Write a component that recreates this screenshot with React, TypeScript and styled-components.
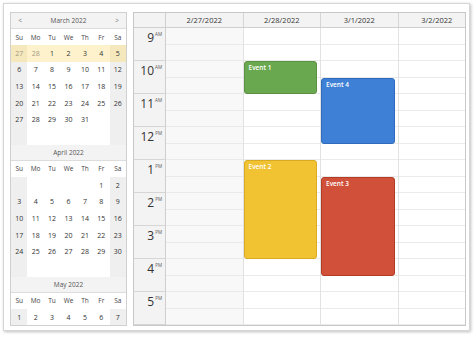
import styled, { createGlobalStyle } from "styled-components";

const GlobalStyle = createGlobalStyle`
  body {
    margin: 0;
    background: #fff;
    font-family: "Open Sans", "Noto Sans", sans-serif;
    color: #333;
  }
`;

type NavDay = { day: number | null; other?: boolean };
type NavMonth = { title: string; weeks: NavDay[][]; selectedWeek?: number; arrows?: boolean };

// rows: how many week rows fit in the navigator for this month
function buildMonth(firstDow: number, length: number, prevLength: number, showPrev: boolean, rows = 6): NavDay[][] {
  const cells: NavDay[] = [];
  for (let i = 0; i < firstDow; i++) {
    cells.push(showPrev ? { day: prevLength - firstDow + 1 + i, other: true } : { day: null });
  }
  for (let d = 1; d <= length; d++) cells.push({ day: d });
  while (cells.length < 42) cells.push({ day: null });
  const weeks: NavDay[][] = [];
  for (let w = 0; w < rows; w++) weeks.push(cells.slice(w * 7, w * 7 + 7));
  return weeks;
}

const months: NavMonth[] = [
  { title: "March 2022", weeks: buildMonth(2, 31, 28, true), selectedWeek: 0, arrows: true },
  { title: "April 2022", weeks: buildMonth(5, 30, 31, false) },
  { title: "May 2022", weeks: buildMonth(0, 31, 30, false, 1) },
];

const dayNames = ["Su", "Mo", "Tu", "We", "Th", "Fr", "Sa"];

const hours = [
  { h: "9", s: "AM" },
  { h: "10", s: "AM" },
  { h: "11", s: "AM" },
  { h: "12", s: "PM" },
  { h: "1", s: "PM" },
  { h: "2", s: "PM" },
  { h: "3", s: "PM" },
  { h: "4", s: "PM" },
  { h: "5", s: "PM" },
];

const days = ["2/27/2022", "2/28/2022", "3/1/2022", "3/2/2022"];

// start / end in hours from 9 AM
const events = [
  { text: "Event 1", day: 1, start: 1, end: 2, color: "#6aa84f", border: "#5a9142" },
  { text: "Event 4", day: 2, start: 1.5, end: 3.5, color: "#3d80d6", border: "#2f6cbd" },
  { text: "Event 2", day: 1, start: 4, end: 7, color: "#f1c232", border: "#d9aa22" },
  { text: "Event 3", day: 2, start: 4.5, end: 7.5, color: "#d0503a", border: "#b33c27" },
];

const HOUR = 33;

function App() {
  return (
    <>
      <GlobalStyle />
      <Card>
        <Navigator>
          {months.map((m) => (
            <Month key={m.title}>
              <MonthTitle>
                <Arrow>{m.arrows ? "<" : ""}</Arrow>
                <span>{m.title}</span>
                <Arrow>{m.arrows ? ">" : ""}</Arrow>
              </MonthTitle>
              <DayNames>
                {dayNames.map((d) => (
                  <DayName key={d}>{d}</DayName>
                ))}
              </DayNames>
              <Weeks>
                {m.weeks.map((week, wi) =>
                  week.map((c, di) => (
                    <DayCell
                      key={`${wi}-${di}`}
                      $weekend={di === 0 || di === 6}
                      $selected={m.selectedWeek === wi}
                      $other={!!c.other}
                    >
                      {c.day ?? ""}
                    </DayCell>
                  ))
                )}
              </Weeks>
            </Month>
          ))}
        </Navigator>

        <Calendar>
          <HeaderRow>
            <Corner />
            {days.map((d) => (
              <DayHeader key={d}>{d}</DayHeader>
            ))}
          </HeaderRow>
          <Body>
            <RowHeader>
              {hours.map((h) => (
                <HourLabel key={h.h}>
                  {h.h}
                  <Suffix>{h.s}</Suffix>
                </HourLabel>
              ))}
            </RowHeader>
            {days.map((d, di) => (
              <DayColumn key={d}>
                {hours.map((h) => (
                  <HourCell key={h.h}>
                    <HalfCell $off={di === 0} />
                    <HalfCell $off={di === 0} />
                  </HourCell>
                ))}
                {events
                  .filter((e) => e.day === di)
                  .map((e) => (
                    <Event
                      key={e.text}
                      $color={e.color}
                      $border={e.border}
                      style={{ top: e.start * HOUR, height: (e.end - e.start) * HOUR }}
                    >
                      {e.text}
                    </Event>
                  ))}
              </DayColumn>
            ))}
          </Body>
        </Calendar>
      </Card>
    </>
  );
}

const Card = styled.div`
  margin: 3px;
  width: 467px;
  height: 328px;
  box-sizing: border-box;
  border: 1px solid #d6d6d6;
  box-shadow: 1px 1px 3px rgba(0, 0, 0, 0.25);
  padding: 8px 3px 4px 6px;
  display: flex;
  gap: 6px;
`;

const Navigator = styled.div`
  width: 117px;
  height: 314px;
  flex-shrink: 0;
  box-sizing: border-box;
  border: 1px solid #d0d0d0;
  overflow: hidden;
  font-size: 7px;
`;

const Month = styled.div`
  display: flex;
  flex-direction: column;
`;

const MonthTitle = styled.div`
  height: 16px;
  box-sizing: border-box;
  background: #f3f3f3;
  border-bottom: 1px solid #dcdcdc;
  display: flex;
  align-items: center;
  justify-content: space-between;
  padding: 0 6px;
  color: #555;
  font-size: 6.5px;
`;

const Arrow = styled.span`
  width: 6px;
  text-align: center;
  color: #777;
`;

const DayNames = styled.div`
  height: 16px;
  display: grid;
  grid-template-columns: repeat(7, 1fr);
  background: #fff;
`;

const DayName = styled.div`
  display: flex;
  align-items: center;
  justify-content: center;
  color: #444;
  font-size: 6.5px;
`;

const Weeks = styled.div`
  display: grid;
  grid-template-columns: repeat(7, 1fr);
  grid-auto-rows: 16.67px;
`;

const DayCell = styled.div<{ $weekend: boolean; $selected: boolean; $other: boolean }>`
  display: flex;
  align-items: center;
  justify-content: center;
  color: ${({ $other }) => ($other ? "#a39a84" : "#333")};
  background: ${({ $weekend, $selected }) =>
    $selected ? ($weekend ? "#f6e8bd" : "#fdf2cc") : $weekend ? "#efefef" : "#fff"};
`;

const Calendar = styled.div`
  width: 333px;
  height: 314px;
  box-sizing: border-box;
  border: 1px solid #c8c8c8;
  overflow: hidden;
  display: flex;
  flex-direction: column;
`;

const HeaderRow = styled.div`
  display: grid;
  grid-template-columns: 32px repeat(4, 77.5px);
  height: 15px;
  box-sizing: border-box;
  flex-shrink: 0;
  border-bottom: 1px solid #cfcfcf;
  background: #f3f3f3;
`;

const Corner = styled.div`
  border-right: 1px solid #cfcfcf;
`;

const DayHeader = styled.div`
  display: flex;
  align-items: center;
  justify-content: center;
  border-right: 1px solid #d6d6d6;
  font-size: 7.5px;
  color: #333;
`;

const Body = styled.div`
  display: grid;
  grid-template-columns: 32px repeat(4, 77.5px);
`;

const RowHeader = styled.div`
  background: #f3f3f3;
  border-right: 1px solid #cfcfcf;
`;

const HourLabel = styled.div`
  height: ${HOUR}px;
  box-sizing: border-box;
  border-bottom: 1px solid #d6d6d6;
  padding: 4px 3px 0 0;
  text-align: right;
  font-size: 12px;
  line-height: 12px;
  color: #333;
`;

const Suffix = styled.span`
  font-size: 4.5px;
  line-height: 5px;
  vertical-align: top;
  margin-left: 1px;
  color: #555;
`;

const DayColumn = styled.div`
  position: relative;
  border-right: 1px solid #e2e2e2;
`;

const HourCell = styled.div`
  height: ${HOUR}px;
  display: flex;
  flex-direction: column;
`;

const HalfCell = styled.div<{ $off: boolean }>`
  flex: 1;
  box-sizing: border-box;
  border-bottom: 1px solid #eaeaea;
  background: ${({ $off }) => ($off ? "#f8f8f8" : "#fff")};
`;

const Event = styled.div<{ $color: string; $border: string }>`
  position: absolute;
  left: 0;
  right: 3px;
  box-sizing: border-box;
  background: ${({ $color }) => $color};
  border: 1px solid ${({ $border }) => $border};
  border-radius: 3px;
  color: #fff;
  font-size: 6.5px;
  font-weight: 600;
  padding: 2px 4px;
  line-height: 8px;
`;

export default App;
